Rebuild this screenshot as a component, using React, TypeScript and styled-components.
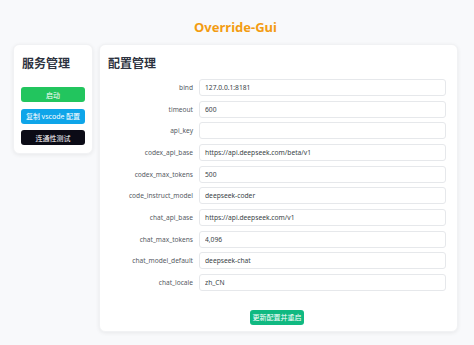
import React from "react";
import styled, { createGlobalStyle } from "styled-components";

const Global = createGlobalStyle`
  html, body { margin: 0; padding: 0; background: #f8f9fb; }
  body { font-family: "Noto Sans", "Noto Sans CJK SC", sans-serif; }
  * { box-sizing: border-box; }
`;

const Page = styled.div`
  min-height: 345px;
  padding: 17px 16px 0 13px;
  display: flex;
  flex-direction: column;
`;

const Title = styled.h1`
  margin: 0 0 7px 0;
  height: 20px;
  line-height: 20px;
  text-align: center;
  font-size: 13px;
  font-weight: 700;
  color: #f39c12;
  font-family: "Noto Sans", sans-serif;
`;

const Layout = styled.div`
  display: flex;
  align-items: flex-start;
  gap: 6px;
`;

const Card = styled.div<{ $w: number }>`
  width: ${(p) => p.$w}px;
  background: #fff;
  border-radius: 6px;
  box-shadow: 0 1px 4px rgba(0, 0, 0, 0.07);
  border: 1px solid #f1f2f4;
`;

const SideCard = styled(Card)`
  padding: 8px 7px 8px 7px;
  display: flex;
  flex-direction: column;
`;

const MainCard = styled(Card)`
  padding: 8px 11px 6px 8px;
`;

const Heading = styled.h2`
  margin: 0 0 6px 0;
  font-size: 12px;
  line-height: 20px;
  font-weight: 700;
  color: #2d3340;
  font-family: "Noto Sans CJK SC", sans-serif;
`;

const SideHeading = styled(Heading)`
  margin: 0 0 14px 1px;
`;

const Btn = styled.button<{ $bg: string }>`
  height: 15px;
  border: none;
  border-radius: 3px;
  background: ${(p) => p.$bg};
  color: #fff;
  font-size: 7px;
  font-family: "Noto Sans CJK SC", "Noto Sans", sans-serif;
  padding: 0 6px;
  display: flex;
  align-items: center;
  justify-content: center;
  white-space: nowrap;
`;

const SubmitBtn = styled(Btn)`
  width: 54px;
`;

const BtnStack = styled.div`
  display: flex;
  flex-direction: column;
  gap: 6.5px;
`;

const Form = styled.div`
  display: flex;
  flex-direction: column;
  gap: 4.67px;
`;

const Row = styled.div`
  display: grid;
  grid-template-columns: 85px 1fr;
  column-gap: 6px;
  align-items: center;
`;

const Label = styled.label`
  text-align: right;
  font-size: 6.6px;
  color: #555a63;
  font-family: "Noto Sans", sans-serif;
`;

const Input = styled.input`
  height: 17px;
  width: 100%;
  border: 1px solid #e6e8eb;
  border-radius: 3px;
  padding: 0 5px;
  font-size: 6.7px;
  color: #3a3f47;
  font-family: "Noto Sans", sans-serif;
  background: #fff;
  outline: none;
`;

const Footer = styled.div`
  display: flex;
  justify-content: center;
  margin-top: 19px;
`;

const fields: [string, string][] = [
  ["bind", "127.0.0.1:8181"],
  ["timeout", "600"],
  ["api_key", ""],
  ["codex_api_base", "https://api.deepseek.com/beta/v1"],
  ["codex_max_tokens", "500"],
  ["code_instruct_model", "deepseek-coder"],
  ["chat_api_base", "https://api.deepseek.com/v1"],
  ["chat_max_tokens", "4,096"],
  ["chat_model_default", "deepseek-chat"],
  ["chat_locale", "zh_CN"],
];

export default function App() {
  return (
    <>
      <Global />
      <Page>
        <Title>Override-Gui</Title>
        <Layout>
          <SideCard $w={80}>
            <SideHeading>服务管理</SideHeading>
            <BtnStack>
              <Btn $bg="#22c55e">启动</Btn>
              <Btn $bg="#0ea5e9">复制 vscode 配置</Btn>
              <Btn $bg="#0b0b16">连通性测试</Btn>
            </BtnStack>
          </SideCard>
          <MainCard $w={359}>
            <Heading>配置管理</Heading>
            <Form>
              {fields.map(([k, v]) => (
                <Row key={k}>
                  <Label>{k}</Label>
                  <Input defaultValue={v} />
                </Row>
              ))}
            </Form>
            <Footer>
              <SubmitBtn $bg="#10b981">更新配置并重启</SubmitBtn>
            </Footer>
          </MainCard>
        </Layout>
      </Page>
    </>
  );
}
